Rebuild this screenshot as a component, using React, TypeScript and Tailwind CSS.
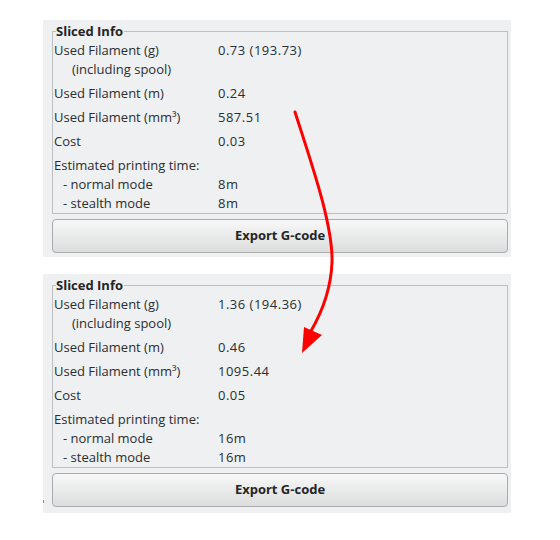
import React from 'react';

interface Row {
  label: React.ReactNode;
  value?: string;
  indent?: string;
}

interface SlicedInfo {
  grams: string;
  meters: string;
  volume: string;
  cost: string;
  normal: string;
  stealth: string;
}

const font = { fontFamily: '"Open Sans", "Noto Sans", sans-serif' };

const Line = ({ label, value, indent = '' }: Row) => (
  <div className="grid h-[19px] grid-cols-[164px_1fr] items-center leading-[19px]">
    <span className={`whitespace-nowrap ${indent}`}>{label}</span>
    <span className="whitespace-nowrap tracking-[0.5px]">{value}</span>
  </div>
);

const InfoPanel = ({ info, bottom }: { info: SlicedInfo; bottom: string }) => (
  <div className={`relative w-[468px] bg-[#eff0f1] pl-[9px] pr-[3px] pt-[11px] ${bottom}`}>
    <div className="relative border border-[#bdbfc0] pl-px pt-[9px] text-[13px] text-[#2a2e32]">
      <span className="absolute -top-[10px] left-[3px] bg-[#eff0f1] pr-px text-[13px] font-bold leading-[19px] text-[#232627]">
        Sliced Info
      </span>
      <div className="flex flex-col gap-[5px]">
        <div>
          <Line label="Used Filament (g)" value={info.grams} />
          <Line label="(including spool)" indent="pl-[18px]" />
        </div>
        <Line label="Used Filament (m)" value={info.meters} />
        <Line label="Used Filament (mm³)" value={info.volume} />
        <Line label="Cost" value={info.cost} />
        <div>
          <Line label="Estimated printing time:" />
          <Line label="- normal mode" value={info.normal} indent="pl-[9px]" />
          <Line label="- stealth mode" value={info.stealth} indent="pl-[9px]" />
        </div>
      </div>
    </div>
    <button className="mt-[5px] flex h-[34px] w-full items-center justify-center rounded-[4px] border border-[#a9abad] bg-gradient-to-b from-[#f8f8f8] to-[#dcdddd] text-[13px] font-bold text-[#232627]">
      Export G-code
    </button>
  </div>
);

export default function App() {
  const before: SlicedInfo = {
    grams: '0.73 (193.73)',
    meters: '0.24',
    volume: '587.51',
    cost: '0.03',
    normal: '8m',
    stealth: '8m',
  };
  const after: SlicedInfo = {
    grams: '1.36 (194.36)',
    meters: '0.46',
    volume: '1095.44',
    cost: '0.05',
    normal: '16m',
    stealth: '16m',
  };

  return (
    <div className="relative h-[540px] w-[560px] bg-white" style={font}>
      <div className="flex flex-col gap-[17px] pl-[43px] pt-[20px]">
        <InfoPanel info={before} bottom="pb-[4px]" />
        <div className="relative">
          <InfoPanel info={after} bottom="pb-[6px]" />
          <span className="absolute bottom-[10px] left-0 h-[3px] w-px bg-[#8a8c8e]" />
        </div>
      </div>

      {/* red arrow drawn over both panels */}
      <svg className="pointer-events-none absolute left-0 top-0" width="560" height="540" viewBox="0 0 560 540">
        <path
          d="M295 112 C312 165 333 225 332 262 C331 290 322 312 311 331"
          fill="none"
          stroke="#ff0000"
          strokeWidth="3"
          strokeLinecap="round"
        />
        <polygon points="302,353 304,327 322,335" fill="#ff0000" />
      </svg>
    </div>
  );
}
